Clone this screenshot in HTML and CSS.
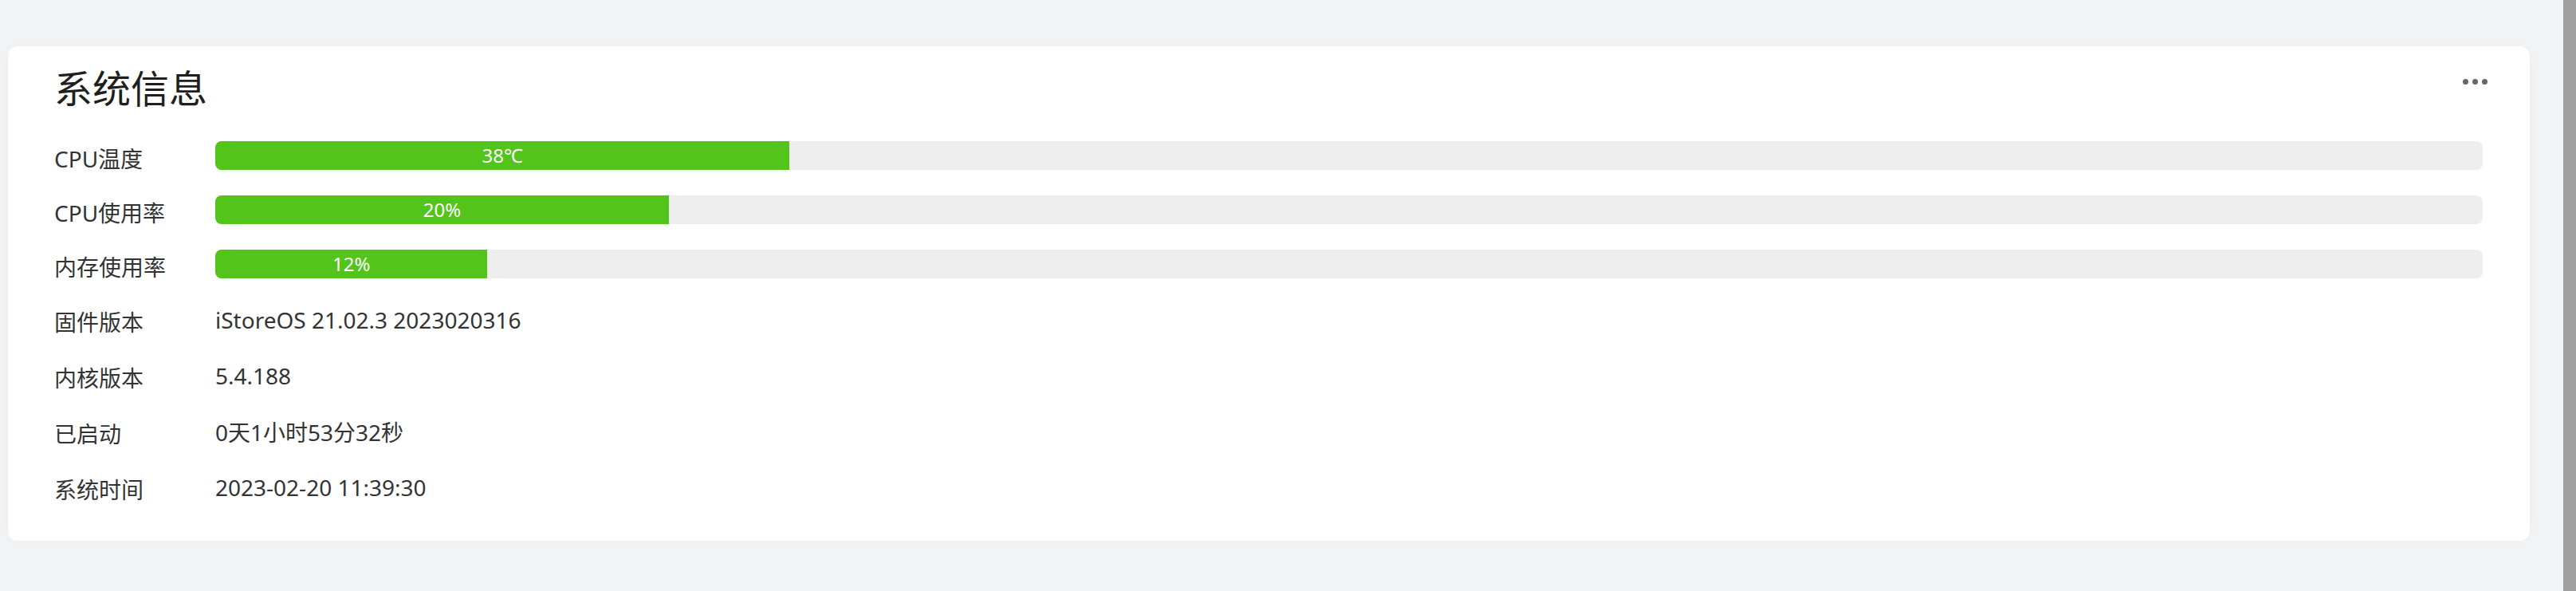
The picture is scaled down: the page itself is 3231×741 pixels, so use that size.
FILE: index.html
```html
<!DOCTYPE html>
<html lang="zh-CN">
<head>
  <meta charset="UTF-8">
  <meta name="viewport" content="width=device-width, initial-scale=1.0">
  <title>系统信息</title>
  <link rel="stylesheet" href="styles.css">
</head>
<body>
  <div class="page">
    <div class="card">
      <div class="card-header">
        <h2 class="card-title">系统信息</h2>
        <div class="more">
          <span class="dot"></span>
          <span class="dot"></span>
          <span class="dot"></span>
        </div>
      </div>

      <div class="row bar-row">
        <div class="label">CPU温度</div>
        <div class="track"><div class="fill" style="width: 25.33%">38℃</div></div>
      </div>
      <div class="row bar-row">
        <div class="label">CPU使用率</div>
        <div class="track"><div class="fill" style="width: 20%">20%</div></div>
      </div>
      <div class="row bar-row">
        <div class="label">内存使用率</div>
        <div class="track"><div class="fill" style="width: 12%">12%</div></div>
      </div>
      <div class="row">
        <div class="label">固件版本</div>
        <div class="value">iStoreOS 21.02.3 2023020316</div>
      </div>
      <div class="row">
        <div class="label">内核版本</div>
        <div class="value">5.4.188</div>
      </div>
      <div class="row">
        <div class="label">已启动</div>
        <div class="value">0天1小时53分32秒</div>
      </div>
      <div class="row">
        <div class="label">系统时间</div>
        <div class="value">2023-02-20 11:39:30</div>
      </div>
    </div>
  </div>
  <div class="scrollbar"></div>
</body>
</html>
```

FILE: styles.css
```css
body {
  margin: 0;
  height: 100vh;
  display: flex;
  background-color: #f3f4f6;
  font-family: "Noto Sans", "Noto Sans CJK SC", sans-serif;
  color: #333;
  overflow: hidden;
}
.page {
  flex: 1;
  padding: 58px 42px 0 10px;
}
.scrollbar {
  width: 16px;
  background-color: #a0a0a0;
}
.card {
  background-color: #fff;
  border-radius: 12px;
  padding: 21px 59px 33px 58px;
  box-shadow: 0 0 30px rgba(0, 0, 0, 0.04);
}
.card-header {
  display: flex;
  justify-content: space-between;
  align-items: flex-start;
  margin-bottom: 18px;
}
.card-title {
  margin: 0;
  font-size: 48px;
  line-height: 64px;
  font-weight: normal;
  color: #1f1f1f;
}
.more {
  display: flex;
  gap: 5px;
  margin-top: 20px;
  margin-right: -6px;
}
.dot {
  width: 7px;
  height: 7px;
  border-radius: 50%;
  background-color: #666;
}
.row {
  display: flex;
  align-items: center;
  height: 70px;
  font-size: 28px;
}
.bar-row {
  height: 68px;
}
.label {
  width: 202px;
  flex-shrink: 0;
  padding-top: 5px;
}
.bar-row .label {
  padding-top: 6px;
}
.value {
  color: #333;
  padding-top: 1px;
}
.track {
  flex: 1;
  height: 36px;
  background-color: #eee;
  border-radius: 8px;
  overflow: hidden;
}
.fill {
  height: 100%;
  background-color: #52c41a;
  color: #fff;
  font-size: 24px;
  line-height: 36px;
  text-align: center;
}
```
